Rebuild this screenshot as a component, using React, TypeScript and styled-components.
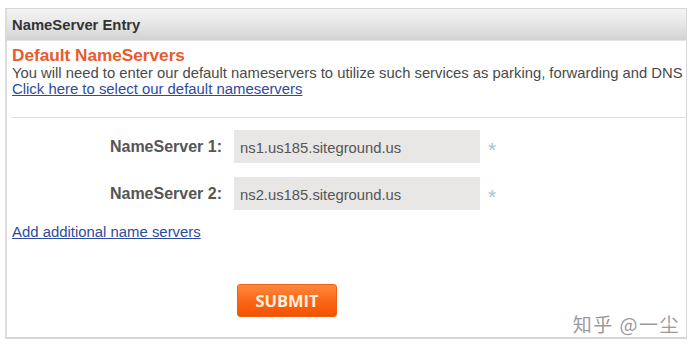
import * as React from 'react'
import styled, { createGlobalStyle } from 'styled-components'

const GlobalStyle = createGlobalStyle`
  html, body {
    margin: 0;
    padding: 0;
    background: #fff;
  }
  body {
    font-family: 'Liberation Sans', Arial, sans-serif;
  }
`

interface ServerField {
  label: string
  value: string
}

const servers: ServerField[] = [
  { label: 'NameServer 1:', value: 'ns1.us185.siteground.us' },
  { label: 'NameServer 2:', value: 'ns2.us185.siteground.us' }
]

export default function App() {
  return (
    <Page>
      <GlobalStyle />
      <Panel>
        <Header>NameServer Entry</Header>
        <Body>
          <Title>Default NameServers</Title>
          <Description>
            You will need to enter our default nameservers to utilize such
            services as parking, forwarding and DNS
          </Description>
          <Link href="#">Click here to select our default nameservers</Link>
          <Divider />
          <Fields>
            {servers.map(s => (
              <FieldRow key={s.label}>
                <Label>{s.label}</Label>
                <Input value={s.value} readOnly />
                <Required>*</Required>
              </FieldRow>
            ))}
          </Fields>
          <Link href="#">Add additional name servers</Link>
          <Footer>
            <SubmitButton type="button">SUBMIT</SubmitButton>
            <Watermark>知乎 @一尘</Watermark>
          </Footer>
        </Body>
      </Panel>
    </Page>
  )
}

const Page = styled.div`
  padding: 8px 10px 0 5px;
  width: 697px;
  height: 353px;
  box-sizing: border-box;
  overflow: hidden;
`

const Panel = styled.section`
  width: 682px;
  height: 331px;
  box-sizing: border-box;
  border: 1px solid #d8d8d8;
  border-bottom: 2px solid #d6d6d6;
  border-left: 2px solid #dcdcdc;
  display: flex;
  flex-direction: column;
`

const Header = styled.h1`
  margin: 0;
  height: 31px;
  padding: 0 5px;
  display: flex;
  align-items: center;
  font-size: 14.8px;
  font-weight: bold;
  color: #333;
  background: linear-gradient(#f4f4f4, #e6e6e6 50%, #d2d2d2);
  border-bottom: 1px solid #e4e4e4;
`

const Body = styled.div`
  flex: 1;
  padding: 5px 0 0 5px;
  display: flex;
  flex-direction: column;
  align-items: flex-start;
`

const Title = styled.h2`
  margin: 0;
  font-size: 17.2px;
  line-height: 19px;
  font-weight: bold;
  color: #ea5a2c;
`

const Description = styled.p`
  margin: 0;
  font-size: 14.8px;
  line-height: 16px;
  color: #4a4a4a;
  white-space: nowrap;
`

const Link = styled.a`
  font-size: 14.9px;
  line-height: 17px;
  color: #2d4ca0;
  text-decoration: underline;
`

const Divider = styled.hr`
  align-self: stretch;
  margin: 19px 0 0 0;
  border: none;
  border-top: 1px solid #dcdcdc;
`

const Fields = styled.div`
  display: flex;
  flex-direction: column;
  gap: 14px;
  margin: 12px 0 14px 0;
`

const FieldRow = styled.div`
  display: flex;
  align-items: center;
`

const Label = styled.label`
  width: 210px;
  text-align: right;
  font-size: 16px;
  font-weight: bold;
  color: #555;
`

const Input = styled.input`
  margin-left: 12px;
  width: 246px;
  height: 33px;
  box-sizing: border-box;
  border: none;
  background: #e8e7e6;
  padding: 2px 6px 0;
  font-family: 'Liberation Sans', Arial, sans-serif;
  font-size: 14.8px;
  color: #555;
  outline: none;
`

const Required = styled.span`
  margin-left: 8px;
  padding-top: 7px;
  font-size: 21px;
  line-height: 20px;
  color: #a2c6de;
`

const Footer = styled.div`
  align-self: stretch;
  flex: 1;
  display: flex;
  align-items: flex-start;
  padding: 43px 0 0 225px;
  position: relative;
`

const SubmitButton = styled.button`
  width: 100px;
  height: 33px;
  border: 1px solid #f06014;
  border-radius: 3px;
  background: linear-gradient(#ff8a3c, #fc6a1c 45%, #f25200);
  color: #fff0dc;
  font-family: 'Open Sans', 'Liberation Sans', sans-serif;
  font-weight: bold;
  font-size: 16.5px;
  cursor: pointer;
`

const Watermark = styled.span`
  position: absolute;
  right: 6px;
  bottom: 0;
  font-family: 'Noto Sans CJK SC', sans-serif;
  font-size: 19px;
  letter-spacing: 1.5px;
  color: #9a9a9a;
`
